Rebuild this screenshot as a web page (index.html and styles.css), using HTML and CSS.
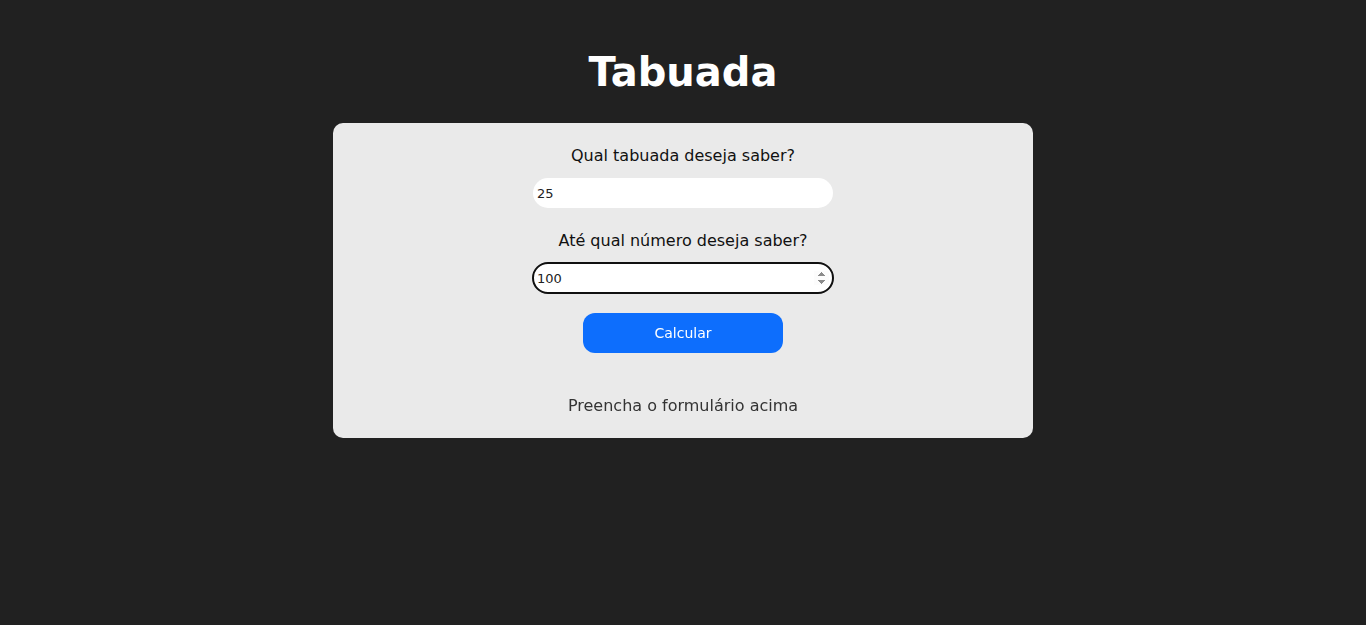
FILE: index.html
```html
<!DOCTYPE html>
<html lang="pt-BR">
<head>
    <meta charset="UTF-8">
    <meta name="viewport" content="width=device-width, initial-scale=1.0">
    <title>Tabuada</title>
    <link rel="stylesheet" href="styles.css">
</head>
<body>
    <h1>Tabuada</h1>
    <main class="card">
        <form class="form" id="form">
            <label for="numero">Qual tabuada deseja saber?</label>
            <input type="number" id="numero" value="25">
            <label for="limite">Até qual número deseja saber?</label>
            <input type="number" id="limite" class="focado" value="100" autofocus>
            <button type="submit">Calcular</button>
        </form>
        <div class="resultado" id="resultado">
            <p>Preencha o formulário acima</p>
        </div>
    </main>
</body>
</html>
```

FILE: styles.css
```css
* {
    margin: 0;
    padding: 0;
    box-sizing: border-box;
}
body {
    font-family: 'DejaVu Sans', sans-serif;
    background: #212121;
    color: #111;
}
h1 {
    color: #fff;
    font-size: 40px;
    font-weight: bold;
    text-align: center;
    line-height: 48px;
    padding-top: 48px;
    margin-bottom: 27px;
}
.card {
    width: 700px;
    margin: 0 auto;
    background: #eaeaea;
    border-radius: 10px;
    padding: 21px 0 20px;
}
.form {
    display: flex;
    flex-direction: column;
    align-items: center;
}
.form label {
    font-size: 16px;
    line-height: 24px;
    margin-bottom: 10px;
}
.form input {
    width: 300px;
    height: 30px;
    border: none;
    border-radius: 15px;
    background: #fff;
    padding: 0 4px;
    font-family: inherit;
    font-size: 13px;
    color: #222;
    margin-bottom: 21px;
}
.form input.focado {
    outline: 2px solid #101010;
    outline-offset: -1px;
    margin-bottom: 20px;
}
.form button {
    width: 200px;
    height: 40px;
    border: none;
    border-radius: 12px;
    background: #0d6efd;
    color: #fff;
    font-family: inherit;
    font-size: 14px;
    cursor: pointer;
}
.resultado {
    margin-top: 41px;
    text-align: center;
    font-size: 16px;
    line-height: 24px;
    color: #333;
}
```
